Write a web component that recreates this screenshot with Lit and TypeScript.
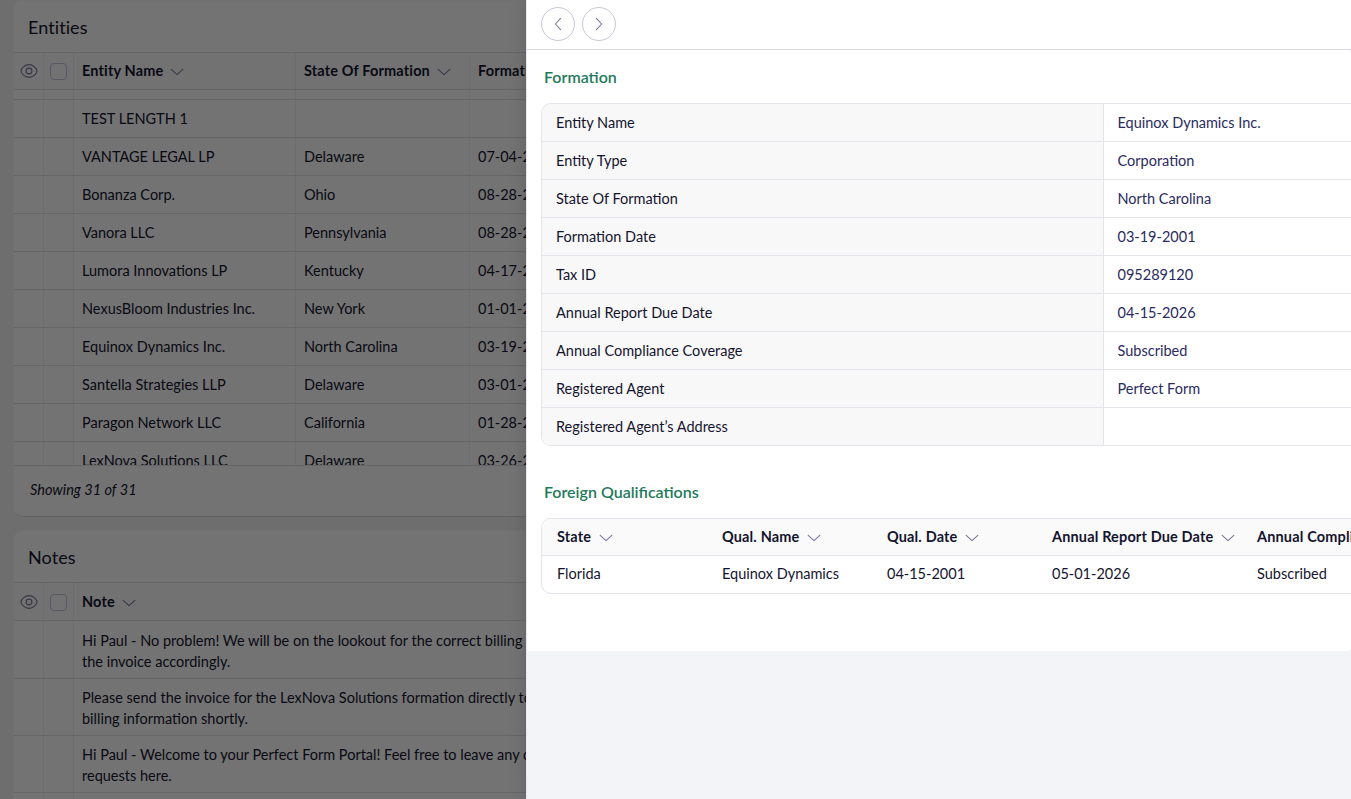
import { css, html, LitElement, svg } from "lit";
import { customElement } from "lit/decorators.js";
import { map } from "lit/directives/map.js";

const ENTITIES = [
  ["TEST LENGTH 1", "", ""],
  ["VANTAGE LEGAL LP", "Delaware", "07-04-2024"],
  ["Bonanza Corp.", "Ohio", "08-28-2024"],
  ["Vanora LLC", "Pennsylvania", "08-28-2024"],
  ["Lumora Innovations LP", "Kentucky", "04-17-2023"],
  ["NexusBloom Industries Inc.", "New York", "01-01-2020"],
  ["Equinox Dynamics Inc.", "North Carolina", "03-19-2001"],
  ["Santella Strategies LLP", "Delaware", "03-01-2022"],
  ["Paragon Network LLC", "California", "01-28-2021"],
  ["LexNova Solutions LLC", "Delaware", "03-26-2025"],
];

const NOTES = [
  ["Hi Paul - No problem! We will be on the lookout for the correct billing", "the invoice accordingly."],
  ["Please send the invoice for the LexNova Solutions formation directly to", "billing information shortly."],
  ["Hi Paul - Welcome to your Perfect Form Portal! Feel free to leave any comments", "requests here."],
  ["", ""],
];

const DETAILS = [
  ["Entity Name", "Equinox Dynamics Inc."],
  ["Entity Type", "Corporation"],
  ["State Of Formation", "North Carolina"],
  ["Formation Date", "03-19-2001"],
  ["Tax ID", "095289120"],
  ["Annual Report Due Date", "04-15-2026"],
  ["Annual Compliance Coverage", "Subscribed"],
  ["Registered Agent", "Perfect Form"],
  ["Registered Agent’s Address", ""],
];

const QUALIFICATIONS = [
  ["State", "Florida"],
  ["Qual. Name", "Equinox Dynamics"],
  ["Qual. Date", "04-15-2001"],
  ["Annual Report Due Date", "05-01-2026"],
  ["Annual Compliance Coverage", "Subscribed"],
];

const icon = (name: string, w: number, h: number, body: unknown) => html`
  <svg class="icon ${name}" width=${w} height=${h} viewBox="0 0 ${w} ${h}">${body}</svg>
`;

const chevron = () => icon("chevron", 14, 8, svg`<path d="M1.200 1.400 7 6.600l5.800-5.200" />`);
const eye = () =>
  icon(
    "eye",
    18,
    16,
    svg`<path d="M1 8c0-2.600 3.900-6.400 8-6.400S17 5.400 17 8s-3.900 6.400-8 6.400S1 10.600 1 8Z" /><circle cx="9" cy="8" r="2.900" />`,
  );

@customElement("app-root")
export class AppRoot extends LitElement {
  static styles = css`
    :host {
      display: block;
      position: relative;
      height: 799px;
      overflow: hidden;
      background: #f3f3f6;
      color: #14142e;
      font: 14.5px/21px Lato, sans-serif;
      white-space: nowrap;
    }

    * {
      box-sizing: border-box;
    }

    .icon {
      display: block;
      flex: none;
      fill: none;
      stroke: #77779c;
      stroke-width: 1.1;
      stroke-linecap: round;
      stroke-linejoin: round;
    }

    .chevron {
      margin-top: 2px;
    }

    .page {
      display: flex;
      flex-direction: column;
      gap: 13px;
      width: 526px;
      height: 799px;
      padding-left: 13px;
      overflow: hidden;
    }

    .card {
      flex: none;
      width: 1325px;
      overflow: hidden;
      background: white;
      border: 1px solid #fafafc;
      border-bottom-color: #dcdce2;
      border-radius: 10px;
    }

    .entities {
      height: 517px;
    }

    .notes {
      height: 400px;
    }

    .title {
      height: 51px;
      padding: 14px 14px 0;
      font-size: 18px;
      line-height: 24px;
      letter-spacing: 0.08px;
    }

    .row {
      display: grid;
      grid-template-columns: 30px 30px 222px 174px 1fr;
      height: 38px;
      border-bottom: 1px solid #e2e2e8;
    }

    .notes .row {
      grid-template-columns: 30px 30px 1fr;
      height: 57px;
    }

    .cell {
      padding: 8px 8px 0;
      border-right: 1px solid #f1f1f6;
    }

    .row .head {
      display: flex;
      align-items: center;
      gap: 7px;
      padding: 0 8px 1px;
      font-weight: 700;
      letter-spacing: 0.15px;
    }

    .row .tool {
      justify-content: center;
      padding: 0;
    }

    .entities .header,
    .notes .header {
      height: 38px;
      border-top: 1px solid #dfdfe7;
      background: #fdfdfe;
    }

    .notes .header {
      height: 39px;
    }

    .notes .head {
      padding-bottom: 0;
    }

    .notes .tool {
      padding-top: 1px;
    }

    .notes .first {
      height: 58px;
      padding-top: 1px;
    }

    .box {
      width: 17px;
      height: 17px;
      border: 1px solid #c5c5df;
      border-radius: 4px;
    }

    .scroll {
      height: 375px;
      overflow: hidden;
    }

    .spacer {
      height: 10px;
    }

    .footer {
      height: 51px;
      padding: 13px 16px;
      border-top: 1px solid #e2e2e8;
      font-style: italic;
    }

    .overlay {
      position: absolute;
      inset: 0;
      background: rgba(0, 0, 0, 0.55);
    }

    .drawer {
      position: absolute;
      inset: 0 0 0 526px;
      overflow: hidden;
      border-left: 1px solid #e7e7ee;
      background: #f3f4f8;
      box-shadow: 0 0 16px rgba(0, 0, 0, 0.15);
    }

    .bar {
      display: flex;
      gap: 7px;
      height: 50px;
      padding: 7px 14px;
      border-bottom: 1px solid #d9d9e1;
      background: white;
    }

    .round {
      display: grid;
      place-items: center;
      width: 34px;
      height: 34px;
      border: 1px solid #c7c7da;
      border-radius: 50%;
    }

    .panel {
      height: 601px;
      padding-left: 14px;
      background: white;
      border-radius: 4px;
    }

    .section {
      margin: 0;
      padding: 15px 3px 0;
      height: 53px;
      color: #1f7a5b;
      font-size: 16px;
      font-weight: 600;
      line-height: 24px;
    }

    .table {
      width: 1124px;
      overflow: hidden;
      border: 1px solid #e4e5ea;
      border-radius: 10px;
    }

    .detail {
      display: grid;
      grid-template-columns: 562px 1fr;
      height: 38px;
    }

    .detail + .detail {
      border-top: 1px solid #e4e5ea;
    }

    .label,
    .value {
      padding: 8px 14px 0;
    }

    .label {
      background: #f8f8f8;
      border-right: 1px solid #e4e5ea;
    }

    .detail:first-child {
      height: 37px;
    }

    .value {
      padding-left: 13.5px;
      color: #2b2b5e;
    }

    .foreign {
      padding-top: 34px;
      height: 72px;
    }

    .quals {
      display: grid;
      grid-template-columns: 165px 165px 165px 205px 1fr;
    }

    .qual {
      height: 37px;
      padding: 7px 15px 0;
    }

    .qual.head {
      display: flex;
      align-items: center;
      gap: 8px;
      padding: 0 15px 1px;
      border-bottom: 1px solid #e4e5ea;
      background: #fafafa;
      font-weight: 700;
      letter-spacing: 0.15px;
    }
  `;

  renderTools(header: boolean) {
    return html`
      <div class="cell ${header ? "head tool" : ""}">${header ? eye() : ""}</div>
      <div class="cell ${header ? "head tool" : ""}">
        ${header ? html`<span class="box"></span>` : ""}
      </div>
    `;
  }

  renderEntities() {
    return html`
      <section class="card entities">
        <div class="title">Entities</div>
        <div class="row header">
          ${this.renderTools(true)}
          ${map(
            ["Entity Name", "State Of Formation", "Formation Date"],
            (name) => html`<div class="cell head">${name}${chevron()}</div>`,
          )}
        </div>
        <div class="scroll">
          <div class="row spacer">
            ${this.renderTools(false)}
            <div class="cell"></div>
            <div class="cell"></div>
          </div>
          ${map(
            ENTITIES,
            (entity) => html`
              <div class="row">
                ${this.renderTools(false)}
                ${map(entity, (text) => html`<div class="cell">${text}</div>`)}
              </div>
            `,
          )}
        </div>
        <div class="footer">Showing 31 of 31</div>
      </section>
    `;
  }

  renderNotes() {
    return html`
      <section class="card notes">
        <div class="title">Notes</div>
        <div class="row header">
          ${this.renderTools(true)}
          <div class="cell head">Note${chevron()}</div>
        </div>
        ${map(
          NOTES,
          ([first, second], i) => html`
            <div class="row ${i === 0 ? "first" : ""}">
              ${this.renderTools(false)}
              <div class="cell">${first}<br />${second}</div>
            </div>
          `,
        )}
      </section>
    `;
  }

  renderDrawer() {
    return html`
      <aside class="drawer">
        <div class="bar">
          <div class="round">${icon("prev", 8, 14, svg`<path d="M6.600 1.400 1.400 7l5.200 5.600" />`)}</div>
          <div class="round">${icon("next", 8, 14, svg`<path d="M1.400 1.400 6.600 7l-5.200 5.600" />`)}</div>
        </div>
        <div class="panel">
          <h3 class="section">Formation</h3>
          <div class="table">
            ${map(
              DETAILS,
              ([label, value]) => html`
                <div class="detail">
                  <div class="label">${label}</div>
                  <div class="value">${value}</div>
                </div>
              `,
            )}
          </div>
          <h3 class="section foreign">Foreign Qualifications</h3>
          <div class="table quals">
            ${map(QUALIFICATIONS, ([name]) => html`<div class="qual head">${name}${chevron()}</div>`)}
            ${map(QUALIFICATIONS, ([, value]) => html`<div class="qual">${value}</div>`)}
          </div>
        </div>
      </aside>
    `;
  }

  render() {
    return html`
      <main class="page">${this.renderEntities()} ${this.renderNotes()}</main>
      <div class="overlay"></div>
      ${this.renderDrawer()}
    `;
  }
}
